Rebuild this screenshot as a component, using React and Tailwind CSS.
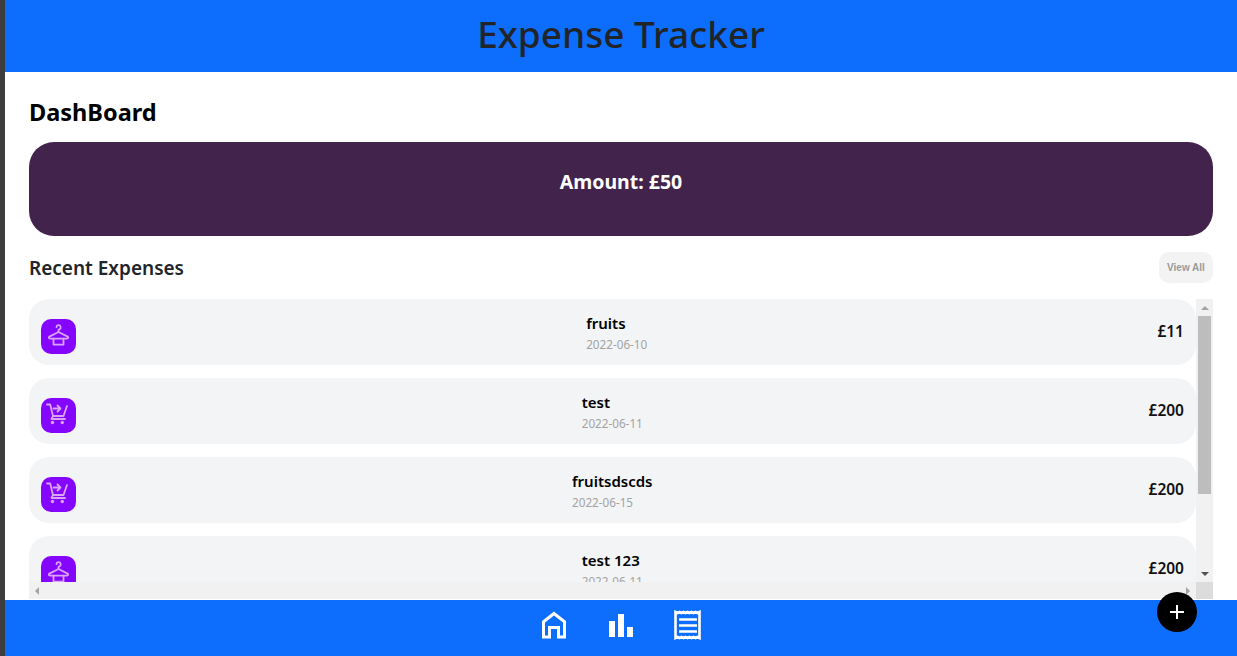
import React from 'react';

const EXPENSES = [
  { id: 1, title: 'fruits', date: '2022-06-10', amount: '£11', icon: 'hanger' },
  { id: 2, title: 'test', date: '2022-06-11', amount: '£200', icon: 'cart' },
  { id: 3, title: 'fruitsdscds', date: '2022-06-15', amount: '£200', icon: 'cart' },
  { id: 4, title: 'test 123', date: '2022-06-11', amount: '£200', icon: 'hanger' },
];

const HangerIcon = () => (
  <svg viewBox="0 0 35 35" className="w-[35px] h-[35px]" fill="none" stroke="#d9a3f7" strokeWidth="1.8" strokeLinecap="round" strokeLinejoin="round">
    <path d="M15.5 8.2a2.1 2.1 0 1 1 3 2l-1 .8v2" />
    <path d="M17.5 13L8.4 17.600c-1 .6-.6 2 .5 2h17.200c1.100 0 1.500-1.400.5-2L17.500 13z" />
    <path d="M12.500 19.600v6h10v-6" />
  </svg>
);

const CartIcon = () => (
  <svg viewBox="0 0 35 35" className="w-[35px] h-[35px]" fill="none" stroke="#d9a3f7" strokeWidth="1.8" strokeLinecap="round" strokeLinejoin="round">
    <path d="M6 6.500h3.200l2.800 11.500h10.500L26 8" />
    <path d="M12 18l-1.500 3h13.500" />
    <path d="M12.500 10.500h7M16.500 7.500l3 3-3 3" />
    <circle cx="11.500" cy="24.500" r="1.700" fill="#d9a3f7" stroke="none" />
    <circle cx="21.300" cy="24.500" r="1.700" fill="#d9a3f7" stroke="none" />
  </svg>
);

const HomeIcon = () => (
  <svg width="26" height="28" viewBox="0 0 26 28" fill="none" stroke="white" strokeWidth="3" strokeLinejoin="miter">
    <path d="M2.500 26V10.800L13 2.500l10.500 8.300V26h-6V16.500h-9V26h-6z" />
  </svg>
);

const BarsIcon = () => (
  <svg width="26" height="24" viewBox="0 0 26 24" fill="white">
    <rect x="1" y="8" width="6" height="16" />
    <rect x="10" y="1" width="6" height="23" />
    <rect x="19" y="14" width="6" height="10" />
  </svg>
);

const ReceiptIcon = () => (
  <svg width="28" height="30" viewBox="0 0 28 30" fill="none">
    <path d="M1.500 2l2 1 2-1 2 1 2-1 2 1 2-1 2 1 2-1 2 1 2-1 2 1 2-1v26l-2-1-2 1-2-1-2 1-2-1-2 1-2-1-2 1-2-1-2 1-2-1-2 1V2z" stroke="white" strokeWidth="2.600" />
    <path d="M5 9.500h18M5 15.500h18M5 21.500h18" stroke="white" strokeWidth="2.600" />
  </svg>
);

const ExpenseRow = ({ expense }) => (
  <div className="shrink-0 h-[66px] flex justify-between rounded-[20px] bg-[#f3f4f6] px-3">
    <div className="mt-5 w-[35px] h-[35px] rounded-[10px] bg-[#8406ff]">
      {expense.icon === 'hanger' ? <HangerIcon /> : <CartIcon />}
    </div>
    <div className="pt-[13px]">
      <div className="text-[15px] leading-[23px] font-semibold text-black">{expense.title}</div>
      <div className="text-[11.7px] leading-[19px] text-[#a3a3a3]">{expense.date}</div>
    </div>
    <div className="pt-[21px] text-[15.5px] leading-[22px] font-semibold text-[#111]">{expense.amount}</div>
  </div>
);

export default function App() {
  return (
    <div className="relative h-screen flex bg-white overflow-hidden" style={{ fontFamily: '"Noto Sans", "Open Sans", sans-serif' }}>
      <div className="w-[5px] shrink-0 bg-[#3c3d3f]" />
      <div className="flex-1 min-w-0 flex flex-col">
        <header className="h-[72px] shrink-0 bg-[#0d6efd] flex items-center justify-center pb-[5px]">
          <h1 className="text-[37px] leading-none font-medium text-[#212529]">Expense Tracker</h1>
        </header>

        <main className="flex-1 min-h-0 flex flex-col px-6 pt-6 pb-px">
          <h2 className="text-[23.5px] leading-8 font-bold text-black">DashBoard</h2>

          <div className="mt-[14px] h-[94px] shrink-0 rounded-[25px] bg-[#41234b] pt-[26px] text-center text-[19.5px] leading-7 font-bold text-white">
            Amount: £50
          </div>

          <div className="mt-4 h-[31px] shrink-0 flex items-center justify-between">
            <h3 className="text-[19px] pt-[2px] font-semibold text-[#212529]">Recent Expenses</h3>
            <button className="w-[54px] h-[31px] rounded-[10px] bg-[#f3f3f3] text-[10px] font-bold text-[#9a9a9a]" style={{ fontFamily: '"Liberation Sans", sans-serif' }}>
              View All
            </button>
          </div>

          <div className="mt-4 flex-1 min-h-0 grid grid-cols-[1fr_17px] grid-rows-[1fr_17px]">
            <div className="min-h-0 overflow-hidden flex flex-col gap-[13px]">
              {EXPENSES.map((expense) => (
                <ExpenseRow key={expense.id} expense={expense} />
              ))}
            </div>

            {/* vertical scrollbar */}
            <div className="bg-[#f1f1f1] flex flex-col items-center">
              <div className="h-[17px] shrink-0 flex items-center justify-center">
                <div className="w-0 h-0 border-x-[4px] border-x-transparent border-b-[4px] border-b-[#a3a3a3]" />
              </div>
              <div className="w-[13px] h-[178px] bg-[#bdbdbd]" />
              <div className="flex-1" />
              <div className="h-[17px] shrink-0 flex items-center justify-center">
                <div className="w-0 h-0 border-x-[4px] border-x-transparent border-t-[4px] border-t-[#505050]" />
              </div>
            </div>

            {/* horizontal scrollbar */}
            <div className="bg-[#f1f1f1] flex items-center justify-between px-[6px]">
              <div className="w-0 h-0 border-y-[4px] border-y-transparent border-r-[4px] border-r-[#a3a3a3]" />
              <div className="w-0 h-0 border-y-[4px] border-y-transparent border-l-[4px] border-l-[#a3a3a3]" />
            </div>
            <div className="bg-[#dcdcdc]" />
          </div>
        </main>

        <nav className="h-14 shrink-0 bg-[#0d6efd] flex items-center justify-center gap-10 pl-px pb-[6px]">
          <button><HomeIcon /></button>
          <button className="ml-px"><BarsIcon /></button>
          <button><ReceiptIcon /></button>
        </nav>
      </div>

      <button className="absolute left-[1157px] top-[592px] w-10 h-10 rounded-full bg-black flex items-center justify-center">
        <svg width="14" height="14" viewBox="0 0 14 14" stroke="white" strokeWidth="2">
          <path d="M7 0v14M0 7h14" />
        </svg>
      </button>
    </div>
  );
}
